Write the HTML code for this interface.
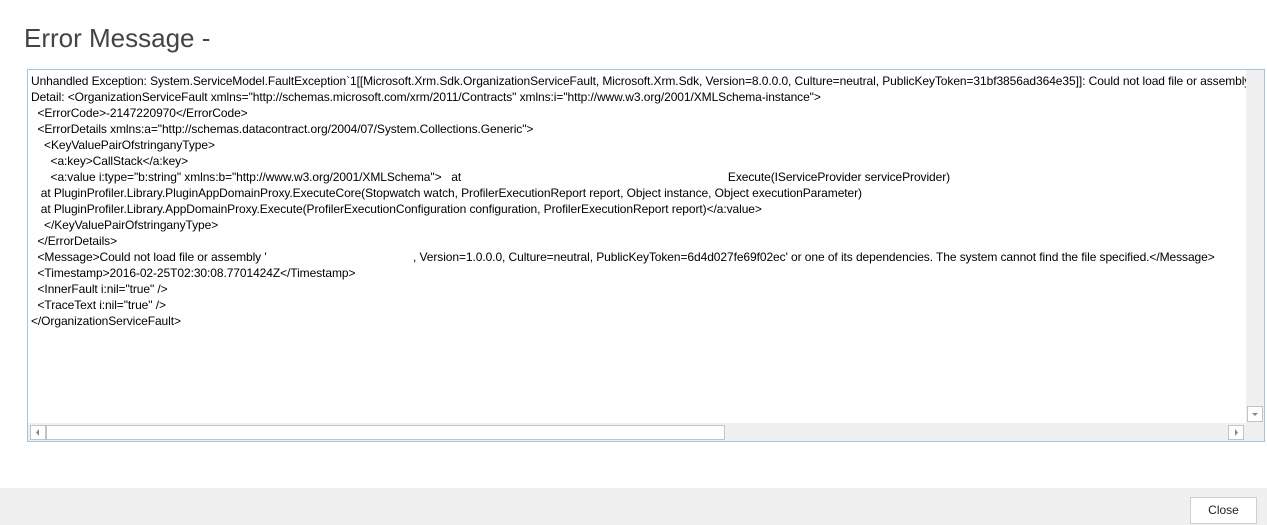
<!DOCTYPE html>
<html><head><meta charset="utf-8"><style>
body{margin:0;width:1267px;height:525px;background:#fff;position:relative;overflow:hidden;font-family:"Liberation Sans",sans-serif}
.t{position:absolute;left:24px;top:23px;font-size:26px;color:#444;font-weight:normal;letter-spacing:0px}
.box{position:absolute;left:27px;top:69px;width:1236px;height:371px;border:1px solid #a6c4e0;overflow:hidden}
.txt{position:absolute;left:3px;top:3px;font-size:12px;line-height:16px;color:#000;white-space:pre;letter-spacing:-0.08px}
.vs{position:absolute;right:0;top:0;width:18px;height:371px;background:#f0f0f0}
.hs{position:absolute;left:0;bottom:0;width:1218px;height:18px;background:#f0f0f0}
.b{position:absolute;border:1px solid #c3c3c3;background:#fff;box-sizing:border-box}
.foot{position:absolute;left:0;top:488px;width:1267px;height:37px;background:#f0f0f0}
.close{position:absolute;left:1190px;top:497px;width:67px;height:27px;border:1px solid #cfcfcf;background:#fff;box-sizing:border-box;font-size:12px;text-align:center;line-height:25px;color:#222}
</style></head><body>
<div class="t">Error Message -</div>
<div class="box">
<div class="txt">Unhandled Exception: System.ServiceModel.FaultException`1[[Microsoft.Xrm.Sdk.OrganizationServiceFault, Microsoft.Xrm.Sdk, Version=8.0.0.0, Culture=neutral, PublicKeyToken=31bf3856ad364e35]]: Could not load file or assembly
Detail: &lt;OrganizationServiceFault xmlns="http://schemas.microsoft.com/xrm/2011/Contracts" xmlns:i="http://www.w3.org/2001/XMLSchema-instance"&gt;
  &lt;ErrorCode&gt;-2147220970&lt;/ErrorCode&gt;
  &lt;ErrorDetails xmlns:a="http://schemas.datacontract.org/2004/07/System.Collections.Generic"&gt;
    &lt;KeyValuePairOfstringanyType&gt;
      &lt;a:key&gt;CallStack&lt;/a:key&gt;
      &lt;a:value i:type="b:string" xmlns:b="http://www.w3.org/2001/XMLSchema"&gt;   at                                                                                  Execute(IServiceProvider serviceProvider)
   at PluginProfiler.Library.PluginAppDomainProxy.ExecuteCore(Stopwatch watch, ProfilerExecutionReport report, Object instance, Object executionParameter)
   at PluginProfiler.Library.AppDomainProxy.Execute(ProfilerExecutionConfiguration configuration, ProfilerExecutionReport report)&lt;/a:value&gt;
    &lt;/KeyValuePairOfstringanyType&gt;
  &lt;/ErrorDetails&gt;
  &lt;Message&gt;Could not load file or assembly '                                             , Version=1.0.0.0, Culture=neutral, PublicKeyToken=6d4d027fe69f02ec' or one of its dependencies. The system cannot find the file specified.&lt;/Message&gt;
  &lt;Timestamp&gt;2016-02-25T02:30:08.7701424Z&lt;/Timestamp&gt;
  &lt;InnerFault i:nil="true" /&gt;
  &lt;TraceText i:nil="true" /&gt;
&lt;/OrganizationServiceFault&gt;</div>
<div class="vs"><div class="b" style="left:1px;top:336px;width:16px;height:16px"><svg width="14" height="14" style="position:absolute;left:0;top:0"><path d="M4 6h6l-3 3z" fill="#888"/></svg></div></div>
<div class="hs">
<div class="b" style="left:2px;top:2px;width:16px;height:15px"><svg width="14" height="13" style="position:absolute;left:0;top:0"><path d="M8 3v7l-3-3.5z" fill="#888"/></svg></div>
<div class="b" style="left:18px;top:2px;width:679px;height:15px"></div>
<div class="b" style="left:1200px;top:2px;width:16px;height:15px"><svg width="14" height="13" style="position:absolute;left:0;top:0"><path d="M6 3v7l3-3.5z" fill="#888"/></svg></div>
</div>
</div>
<div class="foot"></div>
<div class="close">Close</div>
</body></html>
